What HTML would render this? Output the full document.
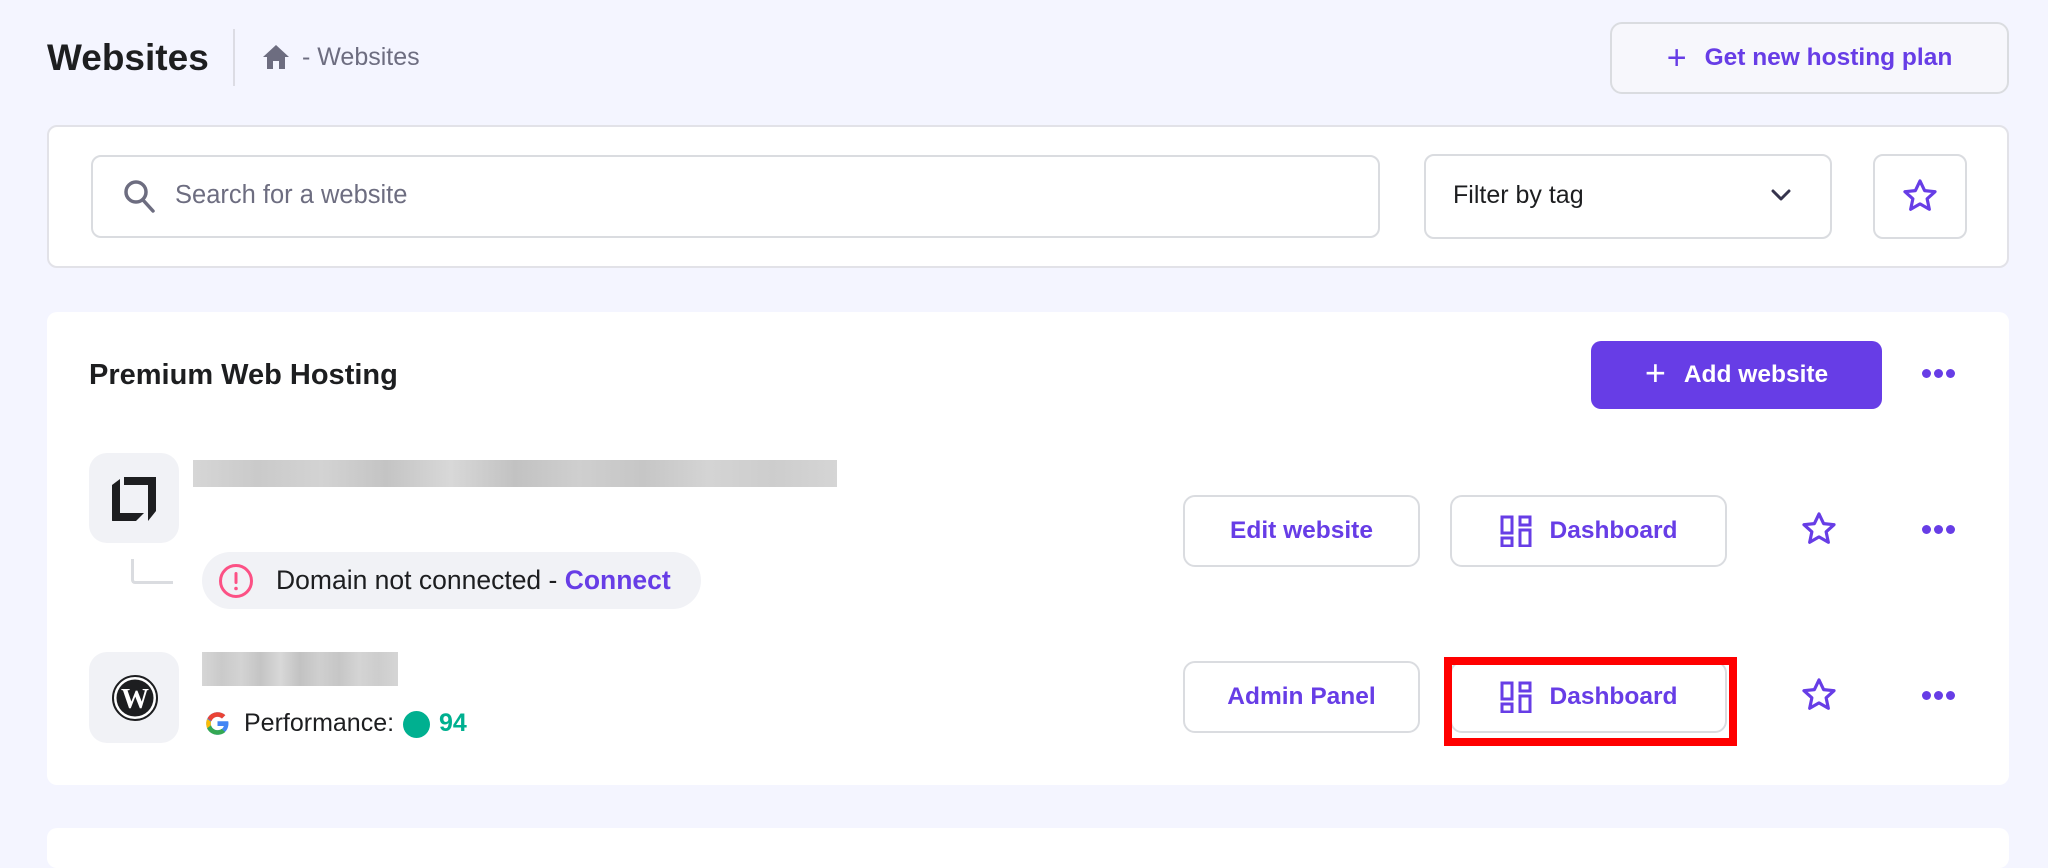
<!DOCTYPE html>
<html><head><meta charset="utf-8"><style>
*{box-sizing:border-box;margin:0;padding:0}
body{width:2048px;height:846px;background:#f4f5ff;font-family:"Liberation Sans",sans-serif;position:relative;overflow:hidden;color:#1d1e20}
.a{position:absolute}
.card{background:#fff;border-radius:10px}
.btn{position:absolute;background:#fff;border:2px solid #dadce0;border-radius:12px;display:flex;align-items:center;justify-content:center;color:#673de6;font-weight:bold;font-size:24.5px;gap:18px}
.blur{position:absolute;background:linear-gradient(90deg,#d6d6d6,#cacaca 10%,#d3d3d3 20%,#c4c4c4 30%,#d8d8d8 40%,#c2c2c2 50%,#cfcfcf 60%,#c6c6c6 70%,#d4d4d4 80%,#cdcdcd 90%,#d5d5d5)}
.dots{position:absolute;display:flex;gap:3px}
.dots i{width:9px;height:9px;border-radius:50%;background:#673de6;display:block}
</style></head><body>
<div class="a" style="left:47px;top:37px;font-size:37px;font-weight:bold">Websites</div>
<div class="a" style="left:233px;top:29px;width:2px;height:57px;background:#dcdce4"></div>
<svg class="a" style="left:262px;top:44px" width="28" height="26" viewBox="0 0 28 26"><path d="M14 1 L27 13 H23 V25 H17 V17 H11 V25 H5 V13 H1 Z" fill="#6d6d80"/></svg>
<div class="a" style="left:302px;top:43px;font-size:25px;color:#6d6d80">- Websites</div>
<div class="btn" style="left:1610px;top:22px;width:399px;height:72px;background:#f7f7fc"><span style="font-size:34px;font-weight:normal">+</span>Get new hosting plan</div>

<div class="a card" style="left:47px;top:125px;width:1962px;height:143px;border:2px solid #e2e2e8"></div>
<div class="a" style="left:91px;top:155px;width:1289px;height:83px;border:2px solid #dadce0;border-radius:10px;background:#fff"></div>
<svg class="a" style="left:122px;top:178px" width="36" height="38" viewBox="0 0 36 38"><circle cx="14" cy="14" r="10" fill="none" stroke="#6d6d80" stroke-width="3.5"/><path d="M21 22 L31 33" stroke="#6d6d80" stroke-width="3.5" stroke-linecap="round"/></svg>
<div class="a" style="left:175px;top:181px;font-size:25.5px;color:#6d6d80">Search for a website</div>
<div class="a" style="left:1424px;top:154px;width:408px;height:85px;border:2px solid #dadce0;border-radius:10px;background:#fff"></div>
<div class="a" style="left:1453px;top:181px;font-size:25px">Filter by tag</div>
<svg class="a" style="left:1770px;top:188px" width="22" height="14" viewBox="0 0 22 14"><path d="M3 3 L11 11 L19 3" fill="none" stroke="#36344d" stroke-width="3" stroke-linecap="round" stroke-linejoin="round"/></svg>
<div class="a" style="left:1873px;top:154px;width:94px;height:85px;border:2px solid #dadce0;border-radius:10px;background:#fff"></div>
<svg class="a" style="left:1901px;top:177px" width="38" height="38" viewBox="0 0 24 24"><path d="M12 2.5 L14.9 8.6 L21.5 9.3 L16.5 13.8 L17.9 20.4 L12 17 L6.1 20.4 L7.5 13.8 L2.5 9.3 L9.1 8.6 Z" fill="none" stroke="#673de6" stroke-width="2" stroke-linejoin="round"/></svg>

<div class="a card" style="left:47px;top:312px;width:1962px;height:473px"></div>
<div class="a" style="left:89px;top:359px;font-size:29px;font-weight:bold">Premium Web Hosting</div>
<div class="a" style="left:1591px;top:341px;width:291px;height:68px;background:#673de6;border-radius:10px;color:#fff;font-weight:bold;font-size:24.5px;display:flex;align-items:center;justify-content:center;gap:18px"><span style="font-size:36px;font-weight:normal;margin-top:-4px">+</span>Add website</div>
<div class="dots" style="left:1922px;top:369px"><i></i><i></i><i></i></div>

<div class="a" style="left:89px;top:453px;width:90px;height:90px;background:#f1f2f6;border-radius:18px"></div>
<svg class="a" style="left:110px;top:475px" width="48" height="48" viewBox="0 0 48 48"><path d="M14 2 H46 L40 10 H14 Z M46 2 V36 L38 46 V10 Z M2 10 L10 4 V38 L2 46 Z M10 38 H34 L26 46 H2 Z" fill="#1d1e20"/></svg>
<div class="blur" style="left:193px;top:460px;width:644px;height:27px"></div>
<div class="a" style="left:131px;top:559px;width:42px;height:25px;border-left:3px solid #dadce0;border-bottom:3px solid #dadce0;border-bottom-left-radius:4px"></div>
<div class="a" style="left:202px;top:552px;width:499px;height:57px;background:#f1f2f6;border-radius:29px"></div>
<svg class="a" style="left:218px;top:563px" width="36" height="36" viewBox="0 0 36 36"><circle cx="18" cy="18" r="15.5" fill="none" stroke="#fc5185" stroke-width="3"/><rect x="16.5" y="9" width="3" height="12" rx="1.5" fill="#fc5185"/><circle cx="18" cy="25.5" r="1.8" fill="#fc5185"/></svg>
<div class="a" style="left:276px;top:565px;font-size:26.5px">Domain not connected - <b style="color:#673de6">Connect</b></div>

<div class="btn" style="left:1183px;top:495px;width:237px;height:72px">Edit website</div>
<div class="btn" style="left:1450px;top:495px;width:277px;height:72px"><svg width="32" height="32" viewBox="0 0 32 32" fill="none" stroke="#673de6" stroke-width="3"><rect x="2" y="2" width="10" height="16"/><rect x="20" y="2" width="10" height="8"/><rect x="2" y="23" width="10" height="8"/><rect x="20" y="15" width="10" height="16"/></svg>Dashboard</div>
<svg class="a" style="left:1800px;top:510px" width="38" height="38" viewBox="0 0 24 24"><path d="M12 2.5 L14.9 8.6 L21.5 9.3 L16.5 13.8 L17.9 20.4 L12 17 L6.1 20.4 L7.5 13.8 L2.5 9.3 L9.1 8.6 Z" fill="none" stroke="#673de6" stroke-width="2" stroke-linejoin="round"/></svg>
<div class="dots" style="left:1922px;top:525px"><i></i><i></i><i></i></div>

<div class="a" style="left:89px;top:652px;width:90px;height:91px;background:#f1f2f6;border-radius:18px"></div>
<svg class="a" style="left:111px;top:674px" width="48" height="48" viewBox="0 0 48 48"><circle cx="24" cy="24" r="22" fill="#fff" stroke="#1d1e20" stroke-width="2"/><circle cx="24" cy="24" r="18.5" fill="#1d1e20"/><text x="24" y="34" text-anchor="middle" font-family="Liberation Serif,serif" font-weight="bold" font-size="28" fill="#fff">W</text></svg>
<div class="blur" style="left:202px;top:652px;width:196px;height:34px"></div>
<svg class="a" style="left:204px;top:710px" width="27" height="27" viewBox="0 0 48 48"><path d="M43.6 20H24v8.5h11.3C34 33 29.6 36 24 36c-6.6 0-12-5.4-12-12s5.4-12 12-12c3 0 5.8 1.1 7.9 3l6-6C34.3 5.8 29.4 4 24 4 13 4 4 13 4 24s9 20 20 20 19.5-8 19.5-20c0-1.3-.1-2.7-.4-4z" fill="#4285f4"/><path d="M6.3 14.7l7 5.1C15.1 15.4 19.2 12 24 12c3 0 5.8 1.1 7.9 3l6-6C34.3 5.8 29.4 4 24 4 16.3 4 9.7 8.3 6.3 14.7z" fill="#ea4335"/><path d="M24 44c5.3 0 10.1-1.8 13.8-5l-6.4-5.4C29.4 35.1 26.8 36 24 36c-5.6 0-10.3-3.7-11.6-8.8l-7 5.4C8.8 39.4 15.8 44 24 44z" fill="#34a853"/><path d="M12.4 27.2c-.3-1-.4-2.1-.4-3.2s.2-2.2.5-3.2l-7-5.1C4.5 18.3 4 21.1 4 24s.6 5.8 1.5 8.4z" fill="#fbbc05"/></svg>
<div class="a" style="left:244px;top:709px;font-size:25px">Performance:</div>
<div class="a" style="left:403px;top:711px;width:27px;height:27px;border-radius:50%;background:#00b090"></div>
<div class="a" style="left:439px;top:709px;font-size:25px;font-weight:bold;color:#00b090">94</div>

<div class="btn" style="left:1183px;top:661px;width:237px;height:72px">Admin Panel</div>
<div class="btn" style="left:1450px;top:661px;width:277px;height:72px"><svg width="32" height="32" viewBox="0 0 32 32" fill="none" stroke="#673de6" stroke-width="3"><rect x="2" y="2" width="10" height="16"/><rect x="20" y="2" width="10" height="8"/><rect x="2" y="23" width="10" height="8"/><rect x="20" y="15" width="10" height="16"/></svg>Dashboard</div>
<div class="a" style="left:1444px;top:657px;width:293px;height:89px;border:8px solid #ff0000"></div>
<svg class="a" style="left:1800px;top:676px" width="38" height="38" viewBox="0 0 24 24"><path d="M12 2.5 L14.9 8.6 L21.5 9.3 L16.5 13.8 L17.9 20.4 L12 17 L6.1 20.4 L7.5 13.8 L2.5 9.3 L9.1 8.6 Z" fill="none" stroke="#673de6" stroke-width="2" stroke-linejoin="round"/></svg>
<div class="dots" style="left:1922px;top:691px"><i></i><i></i><i></i></div>

<div class="a card" style="left:47px;top:828px;width:1962px;height:40px"></div>
</body></html>
